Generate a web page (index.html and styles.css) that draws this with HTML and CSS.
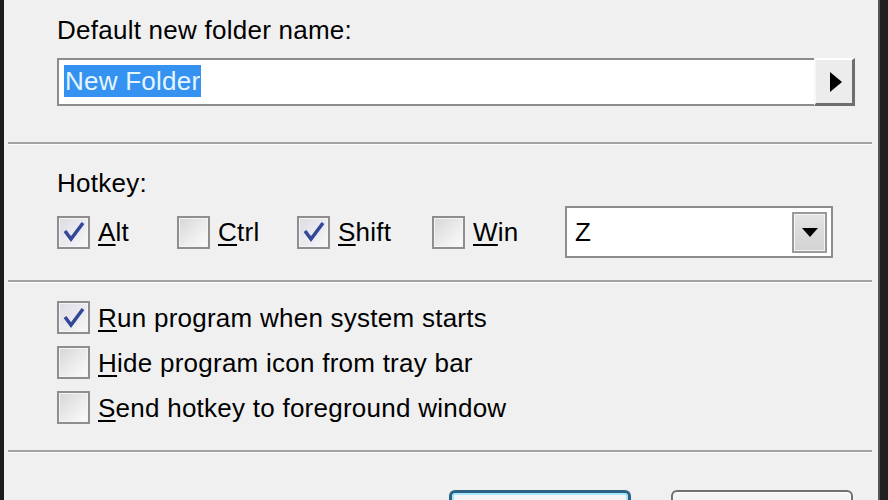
FILE: index.html
```html
<!DOCTYPE html>
<html>
<head>
<meta charset="utf-8">
<link rel="stylesheet" href="styles.css">
</head>
<body>
<div class="dialog">
  <section class="sec sec-name">
    <div class="label">Default new folder name:</div>
    <div class="field">
      <div class="field-input"><span class="sel">New Folder</span></div>
      <div class="field-btn">
        <svg width="12" height="20" viewBox="0 0 12 20"><path d="M0 0 L12 10 L0 20 Z" fill="#000"/></svg>
      </div>
    </div>
  </section>
  <hr class="sep">
  <section class="sec sec-hotkey">
    <div class="label">Hotkey:</div>
    <div class="hk-row">
      <label class="cb"><span class="box checked"><svg width="28" height="28" viewBox="0 0 28 28"><path d="M5 13 L11 21 L23 5" fill="none" stroke="#34489a" stroke-width="3.5"/></svg></span><span class="txt"><u>A</u>lt</span></label>
      <label class="cb"><span class="box"></span><span class="txt"><u>C</u>trl</span></label>
      <label class="cb"><span class="box checked"><svg width="28" height="28" viewBox="0 0 28 28"><path d="M5 13 L11 21 L23 5" fill="none" stroke="#34489a" stroke-width="3.5"/></svg></span><span class="txt"><u>S</u>hift</span></label>
      <label class="cb"><span class="box"></span><span class="txt"><u>W</u>in</span></label>
      <div class="combo">
        <span class="combo-val">Z</span>
        <span class="combo-btn"><svg width="16" height="9" viewBox="0 0 16 9"><path d="M0 0 L16 0 L8 9 Z" fill="#000"/></svg></span>
      </div>
    </div>
  </section>
  <hr class="sep">
  <section class="sec sec-opts">
    <label class="cb opt"><span class="box checked"><svg width="28" height="28" viewBox="0 0 28 28"><path d="M5 13 L11 21 L23 5" fill="none" stroke="#34489a" stroke-width="3.5"/></svg></span><span class="txt"><u>R</u>un program when system starts</span></label>
    <label class="cb opt"><span class="box"></span><span class="txt"><u>H</u>ide program icon from tray bar</span></label>
    <label class="cb opt"><span class="box"></span><span class="txt"><u>S</u>end hotkey to foreground window</span></label>
  </section>
  <hr class="sep">
  <div class="buttons">
    <div class="btn btn-ok"></div>
    <div class="btn btn-cancel"></div>
  </div>
</div>
</body>
</html>
```

FILE: styles.css
```css
html, body {
  margin: 0;
  padding: 0;
  background: #f0f0f0;
  overflow: hidden;
}
.dialog {
  box-sizing: border-box;
  width: 888px;
  height: 500px;
  overflow: hidden;
  background: #f0f0f0;
  border-left: 4px solid #1c1c1c;
  border-right: 8px solid #202020;
  box-shadow: inset -2px 0 0 #555;
  padding: 0 8px 0 4px;
  font-family: "Liberation Sans", Arial, sans-serif;
  font-size: 26px;
  line-height: 30px;
  letter-spacing: 0.25px;
  color: #000;
}
.sec {
  padding-left: 49px;
}
.label {
  height: 30px;
}
.sec-name {
  padding-top: 15px;
  padding-bottom: 36px;
}
.field {
  margin-top: 13px;
  display: flex;
  width: 798px;
  height: 48px;
}
.field-input {
  flex: 1;
  box-sizing: border-box;
  background: #fff;
  border: 2px solid #8c8c8c;
  border-right: none;
  padding: 5px 0 0 5px;
}
.sel {
  display: inline-block;
  background: #3592f0;
  color: #e4f6ff;
  height: 32px;
  line-height: 32px;
  padding: 0 1px;
}
.field-btn {
  box-sizing: border-box;
  width: 41px;
  height: 48px;
  background: #ececec;
  border-top: 2px solid #fff;
  border-left: 2px solid #f8f8f8;
  border-right: 3px solid #6e6e6e;
  border-bottom: 3px solid #6e6e6e;
  display: flex;
  align-items: center;
  justify-content: center;
  padding-left: 3px;
}
.sep {
  margin: 0;
  border: none;
  border-top: 2px solid #a3a3a3;
  border-bottom: 1px solid #fbfbfb;
  height: 0;
}
.sec-hotkey {
  padding-top: 23px;
  padding-bottom: 22px;
}
.hk-row {
  margin-top: 8px;
  display: grid;
  grid-template-columns: 120px 120px 135px 133px 268px;
  align-items: center;
  height: 52px;
}
.cb {
  display: flex;
  align-items: center;
}
.box {
  box-sizing: border-box;
  width: 33px;
  height: 33px;
  border: 2px solid #8e8e8e;
  background: linear-gradient(135deg, #d6d6d6 0%, #ececec 55%, #fbfbfb 100%);
  box-shadow: inset 0 0 0 1px #f4f4f4;
  display: flex;
  align-items: center;
  justify-content: center;
  margin-right: 8px;
  flex: none;
}
.box.checked {
  background: linear-gradient(135deg, #dcdce4 0%, #ececf0 60%, #f8f8f8 100%);
}
.txt u {
  text-decoration-thickness: 2px;
  text-underline-offset: 3px;
}
.combo {
  box-sizing: border-box;
  height: 52px;
  border: 2px solid #8c8c8c;
  background: #fff;
  display: flex;
  align-items: center;
  justify-content: space-between;
  padding: 0 4px 0 8px;
}
.combo-btn {
  box-sizing: border-box;
  width: 35px;
  height: 41px;
  border: 2px solid #9a9a9a;
  background: linear-gradient(180deg, #e4e4e4, #d2d2d2);
  box-shadow: inset 0 0 0 1px #f4f4f4;
  display: flex;
  align-items: center;
  justify-content: center;
}
.sec-opts {
  padding-top: 12px;
  padding-bottom: 20px;
}
.opt {
  height: 45px;
}
.buttons {
  display: flex;
  justify-content: flex-end;
  gap: 40px;
  padding: 37px 19px 0 0;
}
.btn {
  box-sizing: border-box;
  width: 182px;
  height: 46px;
  border-radius: 6px;
  background: linear-gradient(180deg, #f6f6f6, #e2e2e2);
}
.btn-ok {
  border: 3px solid #2c6282;
  box-shadow: inset 0 0 0 2px #a6e6ff;
}
.btn-cancel {
  border: 2px solid #707070;
  box-shadow: inset 0 0 0 1px #fcfcfc;
}
```
